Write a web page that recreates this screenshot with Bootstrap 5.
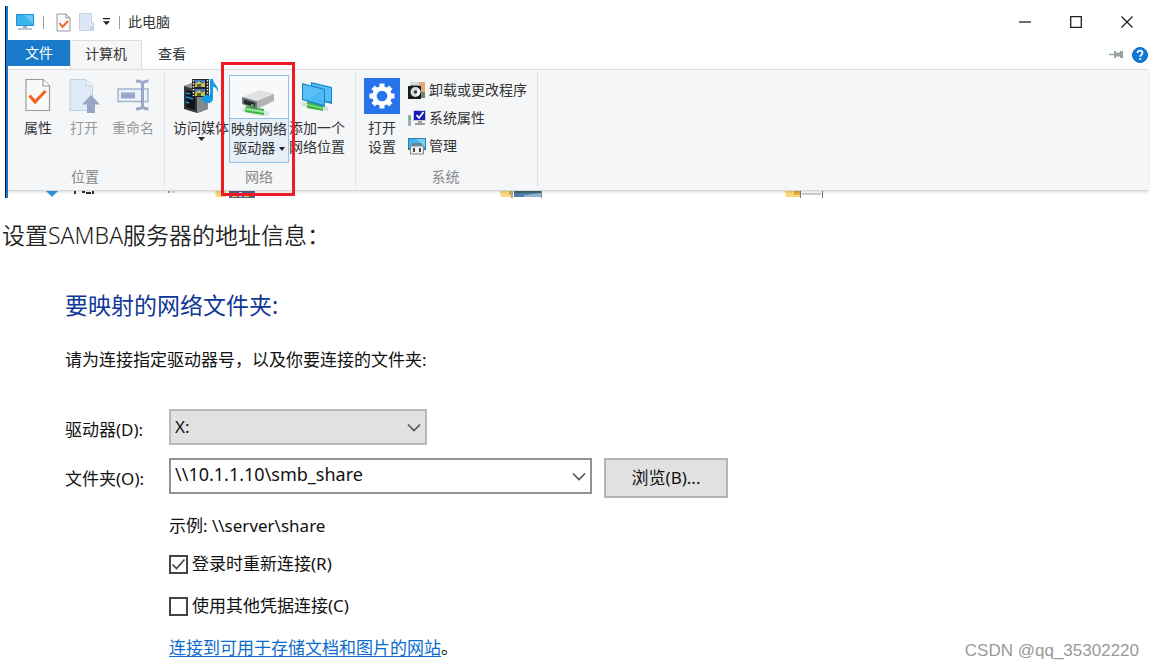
<!DOCTYPE html>
<html lang="zh-CN">
<head>
<meta charset="utf-8">
<meta name="viewport" content="width=device-width, initial-scale=1">
<title>映射网络驱动器</title>
<link href="https://cdn.jsdelivr.net/npm/bootstrap@5.3.0/dist/css/bootstrap.min.css" rel="stylesheet">
<style>
  body { font-family: "Noto Sans", "Noto Sans CJK SC", sans-serif; font-size: 17px; line-height: 24px; color: #111; background: #fff; overflow-x: hidden; }
  svg { display: block; flex: none; }
  button { color: inherit; }

  /* explorer window */
  .explorer { margin: 6px 5px 0; border-left: 1px solid #0a1c30; font-size: 14px; line-height: 18px; color: #333; }
  .explorer-inner { border-left: 2px solid #1979ca; }
  .titlebar { height: 34px; padding: 0 0 2px 7px; }
  .plain-btn { border: 0; background: none; padding: 0; }
  .win-btn { width: 43px; height: 30px; display: flex; align-items: center; justify-content: center; }
  .v-sep { width: 1px; height: 13px; background: #999; }
  .ribbon-tabs { height: 29px; }
  .ribbon-tabs .nav-link { padding: 4px 15px; border: 1px solid transparent; border-bottom: 0; border-radius: 0; color: #333; height: 29px; line-height: 18px; }
  .ribbon-tabs .tab-file { background: #1979ca; color: #fff; height: 26px; padding: 3px 16px; }
  .ribbon-tabs .tab-current { background: #f5f6f8; border-color: #dcdee0; padding: 4px 14px; }
  .ribbon { background: #f5f6f8; border-top: 1px solid #dcdee0; border-bottom: 1px solid #d5d7d9; height: 122px; box-shadow: 0 1px 3px rgba(0,0,0,.16); position: relative; z-index: 1; }
  .ribbon-group { margin: 2px 0 4px; padding: 0 10px 0 8px; border-right: 1px solid #e0e2e4; display: flex; flex-direction: column; justify-content: space-between; }
  .group-name { color: #888; text-align: center; line-height: 18px; }
  .tool { border: 0; background: none; padding: 6px 0 0; display: flex; flex-direction: column; align-items: center; white-space: nowrap; line-height: 19px; }
  .tool .pic { height: 40px; }
  .tool:disabled { color: #999; }
  .tool-map { position: relative; width: 60px; height: 88px; margin-top: 3px; padding: 0; border: 1px solid #92c0e8; }
  .tool-map .pic { height: 43px; width: 58px; border-bottom: 1px solid #92c0e8; background: #f7f9fb; padding: 11px 0 0 9px; }
  .tool-map .cap { background: #e6eef7; width: 58px; flex: 1; }
  .red-mark { position: absolute; inset: -14px -7px -34px -9px; border: 3px solid #ed1c24; pointer-events: none; z-index: 2; }
  .small-tool { display: flex; align-items: center; gap: 3px; height: 28px; }
  .file-strip { height: 7px; overflow: hidden; display: grid; grid-template-columns: 207px 285px 285px 1fr; }

  /* article and dialog */
  .step { margin: 24px 2px 0; font-size: 23px; line-height: 26px; font-weight: 350; font-family: "Noto Sans", "Noto Sans CJK SC", sans-serif; color: #222; }
  .map-dialog { padding: 42px 14px 0 65px; }
  .map-dialog h1 { font-size: 23px; line-height: 30px; font-weight: 400; color: #0f3797; margin: 0 0 28px; }
  .field-row { display: flex; align-items: flex-start; margin-top: 13px; }
  .drive-row { margin-top: 37px; }
  .field-label { width: 104px; flex: none; padding-top: 9px; }
  .drive { width: 258px; height: 36px; padding: 0 4px 1px; font-size: 17px; line-height: 24px; color: #111; border: 2px solid #b9b9b9; border-radius: 0; background: #e1e1e1 url("data:image/svg+xml,%3Csvg xmlns='http://www.w3.org/2000/svg' viewBox='0 0 14 9'%3E%3Cpath d='M1 1.5l6 6 6-6' fill='none' stroke='%23555' stroke-width='1.7'/%3E%3C/svg%3E") no-repeat right 4px center / 14px 9px; }
  .folder { width: 423px; height: 36px; border: 2px solid #929292; padding-right: 4px; }
  .folder input { border: 0; outline: 0; padding: 0 4px 4px; min-width: 0; color: #111; background: none; font-size: 18px; }
  .browse { width: 124px; height: 40px; border: 2px solid #b5b5b5; border-radius: 0; background: #e1e1e1; color: #111; font-size: 17px; padding: 0; margin-left: 12px; }
  .indent { padding-left: 104px; }
  .example { margin: 16px 0 14px; }
  .tick { gap: 4px; margin-bottom: 18px; }
  .tick .form-check-input { width: 19px; height: 19px; margin: 0; border: 2px solid #444; border-radius: 0; background-color: #fff; background-size: 15px 15px; }
  .tick .form-check-input:checked { background-color: #fff; background-image: url("data:image/svg+xml,%3Csvg xmlns='http://www.w3.org/2000/svg' viewBox='0 0 15 15'%3E%3Cpath d='M1.5 7.5l4 4 8-9' fill='none' stroke='%23444' stroke-width='1.7'/%3E%3C/svg%3E"); }
  .site-link { color: #0a6cce; text-underline-offset: 2px; }
  .watermark { font-family: "Liberation Sans", sans-serif; font-size: 17px; line-height: 18px; color: #999; }
</style>
</head>
<body>
<section class="explorer">
 <div class="explorer-inner">
  <header class="titlebar d-flex align-items-center">
    <svg width="20" height="18" viewBox="0 0 20 18"><path d="M1 1h18v12H1z" fill="#1e8fd8"/><path d="M2 2h16v10H2z" fill="#38b3ec"/><path d="M9 2h9v9z" fill="#64c9f5"/><path d="M8 13h4v2H8z" fill="#9eb0bc"/><path d="M3 15h14v2H3z" fill="#b3c7d5"/></svg>
    <span class="v-sep ms-2"></span>
    <button class="plain-btn ms-2 ps-1" aria-label="属性"><svg width="15" height="19" viewBox="0 0 15 19"><path d="M1 1h9l4 4v13H1z" fill="#fafafa" stroke="#999"/><path d="M10 1v4h4" fill="none" stroke="#999"/><path d="M3.5 10l3 4 5.5-6" fill="none" stroke="#ed6a26" stroke-width="2"/></svg></button>
    <button class="plain-btn ms-2" aria-label="新建文件夹"><svg width="15" height="18" viewBox="0 0 15 18"><path d="M.5.5h12v9h2v8H.5z" fill="#dde6f5" stroke="#c6d2e6"/><path d="M11 13h3v4h-3z" fill="#c9d6ea"/></svg></button>
    <button class="plain-btn ms-2" aria-label="自定义快速访问工具栏"><svg width="9" height="8" viewBox="0 0 9 8"><path d="M1 0h7v1.3H1zM1 3.3h7L4.5 7z" fill="#222"/></svg></button>
    <span class="v-sep ms-2"></span>
    <span class="ms-2">此电脑</span>
    <div class="ms-auto d-flex gap-2">
      <button class="plain-btn win-btn" aria-label="最小化"><svg width="12" height="12" viewBox="0 0 12 12"><path d="M0 6h12" stroke="#222" stroke-width="1.3"/></svg></button>
      <button class="plain-btn win-btn" aria-label="最大化"><svg width="12" height="12" viewBox="0 0 12 12"><path d="M.7.7h10.6v10.6H.7z" fill="none" stroke="#222" stroke-width="1.3"/></svg></button>
      <button class="plain-btn win-btn" aria-label="关闭"><svg width="12" height="12" viewBox="0 0 12 12"><path d="M.5.5l11 11M11.500.5l-11 11" stroke="#222" stroke-width="1.3"/></svg></button>
    </div>
  </header>

  <nav class="ribbon-tabs d-flex">
    <a href="#file" class="nav-link tab-file">文件</a>
    <a href="#computer" class="nav-link tab-current">计算机</a>
    <a href="#view" class="nav-link">查看</a>
    <div class="ms-auto d-flex align-items-center gap-2">
      <button class="plain-btn" aria-label="固定功能区"><svg width="15" height="9" viewBox="0 0 15 9"><path d="M0 4.500h6" stroke="#96a0a7" stroke-width="1.4"/><path d="M5 1h2v1.500h4V1h3v7h-3V6.500H7V8H5z" fill="#96a0a7"/></svg></button>
      <button class="plain-btn" aria-label="帮助"><svg width="16" height="16" viewBox="0 0 16 16"><circle cx="8" cy="8" r="7.500" fill="#0c7bd8" stroke="#0868b5"/><path d="M5.500 6C5.500 2.800 10.500 2.900 10.500 6c0 1.800-2.300 1.800-2.300 3.700" fill="none" stroke="#fff" stroke-width="1.700"/><circle cx="8.200" cy="12" r="1.100" fill="#fff"/></svg></button>
    </div>
  </nav>

  <div class="ribbon d-flex">
    <div class="ribbon-group">
      <div class="d-flex">
        <button class="tool ms-1 ps-1">
          <span class="pic"><svg width="26" height="34" viewBox="0 0 26 34"><path d="M1 1.500h17l6.500 6.500v24.500H1z" fill="#f9f9f9" stroke="#999" stroke-width="1.200"/><path d="M18 1.500V8h6.500" fill="#fff" stroke="#999" stroke-width="1.200"/><path d="M4.500 17.500l5.500 6.500L20.500 13" fill="none" stroke="#f2641c" stroke-width="3"/></svg></span>属性</button>
        <button class="tool ms-3" disabled>
          <span class="pic"><svg width="32" height="36" viewBox="0 0 32 36"><path d="M2 1.500h16l6.500 6.500v24.500H2z" fill="#e0e9f7" stroke="#c3cfe2"/><path d="M18 1.500V8h6.500" fill="#edf3fc" stroke="#c3cfe2"/><path d="M23 17l9 9.500h-5V35h-8v-8.500h-5z" fill="#98a6c3"/></svg></span>打开</button>
        <button class="tool ms-2 ps-1" disabled>
          <span class="pic"><svg width="34" height="34" viewBox="0 0 34 34"><path d="M2 11h30v12.500H2z" fill="#edf2fa" stroke="#a3b5d3" stroke-width="1.500"/><path d="M5 14.500h14v6H5z" fill="#99a8c8"/><path d="M20 3c4 0 5.500.5 6.500 2.200C27.500 3.500 29 3 32.500 3M26.500 5v24M20 31c4 0 5.500-.5 6.500-2.200 1 1.700 2.500 2.200 6 2.200" fill="none" stroke="#99a8c5" stroke-width="3"/></svg></span>重命名</button>
      </div>
      <div class="group-name">位置</div>
    </div>

    <div class="ribbon-group">
      <div class="d-flex">
        <button class="tool">
          <span class="pic"><svg width="36" height="36" viewBox="0 0 36 36"><path d="M1 8l14-5 10 4v24l-11 4L1 31z" fill="#343638"/><path d="M14 12l11-5v24l-11 4z" fill="#85888a"/><path d="M1 8l14-5 10 4-11 5z" fill="#9a9c9e"/><path d="M3 12l9 2v18l-9-3z" fill="#121416"/><path d="M3 15l4 1m-4 3l7 2m-7 3l3 1" stroke="#1595eb" stroke-width="1.800"/><path d="M9 1h17v18H9z" fill="#242424"/><path d="M12 2h10v7H12zM12 11h10v7H12z" fill="#417dbe"/><path d="M12 6l4-3 3 3 3-2v5H12zM12 15l4-3 3 3 3-2v5H12z" fill="#d9bd40"/><path d="M14 6h4v3h-4zM14 15h4v3h-4z" fill="#397540"/><path d="M10.500 2v16M24.500 2v16" stroke="#e9e9e9" stroke-width="1.500" stroke-dasharray="1.500 1.500"/><ellipse cx="24.500" cy="21" rx="5.500" ry="4.300" fill="#159ce5"/><path d="M27 1h3c0 5 6 6 5 14-1-5-3-6-5-6v12h-3z" fill="#159ce5"/></svg></span>访问媒体
          <svg width="7" height="5" viewBox="0 0 7 5"><path d="M0 0h7L3.500 4z" fill="#222"/></svg></button>
        <button class="tool tool-map">
          <span class="pic"><svg width="40" height="30" viewBox="0 0 40 30"><path d="M2 22l4-2 22 4 3 2-3 3-5 0-19-4z" fill="#dce4e3"/><path d="M7 19l18 3v6L6 25z" fill="#42b548"/><path d="M7 21l18 3v2L7 23z" fill="#98e999"/><path d="M3 11L24 4l11 3v7l-17 8-15-6z" fill="#b2b2b2"/><path d="M3 10L21 3l14 4-17 7z" fill="#e2e2e2"/><path d="M3 10l15 4.500v8L3 17z" fill="#70757a"/><path d="M5 12.500l11 3.500v4L5 16.500z" fill="#252a2c"/><path d="M12 17l3 1v1.500l-3-1z" fill="#4de250"/></svg></span>
          <span class="cap">映射网络<br>驱动器 <svg class="d-inline-block align-middle" width="6" height="4" viewBox="0 0 6 4"><path d="M0 0h6L3 4z" fill="#222"/></svg></span>
          <span class="red-mark"></span></button>
        <button class="tool">
          <span class="pic"><svg width="32" height="34" viewBox="0 0 32 34"><path d="M10 4l21 5v17l-21-5z" fill="#1587d2"/><path d="M11 5.500l19 4.500v14l-19-4z" fill="#54bdf4"/><path d="M1 24l26 5v4L1 28z" fill="#d5ddda"/><path d="M6 23l16 4v6L6 30z" fill="#40b449"/><path d="M6 26l16 4v1L6 27z" fill="#98ec99"/><path d="M1 5l23 6v18L1 22z" fill="#1584cc"/><path d="M2 6.500L23 12v15L2 21z" fill="#4ab8f2"/><path d="M2 6.500L23 12 7 22l-5-1z" fill="#66c8f8" opacity=".5"/></svg></span>
          <span>添加一个<br>网络位置</span></button>
      </div>
      <div class="group-name">网络</div>
    </div>

    <div class="ribbon-group">
      <div class="d-flex">
        <button class="tool">
          <span class="pic"><svg width="36" height="36" viewBox="0 0 36 36"><path d="M0 0h36v36H0z" fill="#2673ec"/><g fill="none" stroke="#fff"><circle cx="18" cy="18" r="7.600" stroke-width="4.500"/><path d="M18 5.500v4m0 17v4M5.500 18h4m17 0h4M9.200 9.200l2.800 2.800m12 12l2.800 2.800m0-17.600L24 12M12 24l-2.800 2.800" stroke-width="5"/></g></svg></span>
          <span>打开<br>设置</span></button>
        <div class="ms-2 pt-1">
          <button class="plain-btn small-tool"><svg width="18" height="18" viewBox="0 0 18 18"><path d="M2 1h13l2 2v14H4z" fill="#70866e"/><path d="M10 1h7v10h-5z" fill="#e0a875"/><path d="M2 1h9v3H2z" fill="#d6d9da"/><path d="M0 5h13v13H0z" fill="#171b1e"/><circle cx="7.500" cy="11" r="5" fill="#d9dddd"/><path d="M7.500 11l4-3 1 3-3 4z" fill="#fff"/><circle cx="7.500" cy="11" r="1.800" fill="#33383b"/></svg>卸载或更改程序</button>
          <button class="plain-btn small-tool"><svg width="18" height="18" viewBox="0 0 18 18"><path d="M0 6h3v11H0z" fill="#a6abad"/><path d="M1 8h2v3H1z" fill="#4bc552"/><path d="M5 1h13v11H5z" fill="#c8ccda"/><path d="M6 2h11v9H6z" fill="#171bb8"/><path d="M8.500 6l2.500 3 4.500-6" fill="none" stroke="#fff" stroke-width="1.700"/><path d="M10 12h4v2h3v2H7v-2h3z" fill="#9b9fa2"/></svg>系统属性</button>
          <button class="plain-btn small-tool"><svg width="18" height="18" viewBox="0 0 18 18"><path d="M0 1h18v12H0z" fill="#2c7db1"/><path d="M1 2h16v9H1z" fill="#41b3ec"/><path d="M8 2h9v8z" fill="#7bd0f7"/><path d="M5 9V7h8v2" fill="none" stroke="#777" stroke-width="1.500"/><path d="M2.500 9h13v8h-13z" fill="#f1f1f1" stroke="#858585"/><path d="M5 11h2v4H5zM11 11h2v4h-2z" fill="#4b4b4b"/></svg>管理</button>
        </div>
      </div>
      <div class="group-name">系统</div>
    </div>
  </div>

  <!-- top edge of the file list, mostly hidden under the ribbon -->
  <div class="file-strip">
    <svg width="180" height="7" viewBox="0 0 180 7"><path d="M38 0h12l-6 6z" fill="#3399dc"/><path d="M66 0h2v3h-2zM74 0h3v2h-3zM78 1h5v2h-5zM84 0h2v3h-2z" fill="#333"/><path d="M160 0h2v2h-2zM165 0h1v2h-1z" fill="#aaa"/></svg>
    <svg width="46" height="7" viewBox="0 0 46 7"><path d="M0 0h11v6H1z" fill="#fbd978"/><path d="M14 0h26v7H14z" fill="#555f88"/><path d="M17 2h5v4h-5zm12 0h5v4h-5z" fill="#f3c940"/><path d="M24 1h3v5h-3z" fill="#c9d5ef"/></svg>
    <svg width="46" height="7" viewBox="0 0 46 7"><path d="M0 0h11v6H1z" fill="#fbd978"/><path d="M9 0h2v4H9z" fill="#e2b23f"/><path d="M11 0h2v7h-2z" fill="#aaa"/><path d="M14 0h27v6H14z" fill="#4a7fae"/><path d="M14 0h27v2H14z" fill="#42666e"/><path d="M24 4l17-2v4H24z" fill="#91b3cc"/><path d="M41 0h1v7h-1z" fill="#888"/></svg>
    <svg width="46" height="7" viewBox="0 0 46 7"><path d="M0 0h15v6H1z" fill="#fbd978"/><path d="M9 0h6v4H9z" fill="#e2b23f"/><path d="M15 0h1v7h-1zM37 0h1v7h-1z" fill="#777"/><path d="M17 2h19v2H17z" fill="#ccc"/></svg>
  </div>
 </div>
</section>

<p class="step">设置SAMBA服务器的地址信息：</p>

<main class="map-dialog">
  <h1>要映射的网络文件夹:</h1>
  <p class="mb-0">请为连接指定驱动器号，以及你要连接的文件夹:</p>

  <form>
    <div class="field-row drive-row">
      <label class="field-label" for="drive">驱动器(D):</label>
      <select class="form-select drive" id="drive"><option>X:</option></select>
    </div>
    <div class="field-row">
      <label class="field-label" for="folder">文件夹(O):</label>
      <div class="folder d-flex align-items-center">
        <input class="flex-fill" type="text" id="folder" value="\\10.1.1.10\smb_share">
        <button type="button" class="plain-btn" aria-label="展开"><svg width="14" height="9" viewBox="0 0 14 9"><path d="M1 1.500l6 6 6-6" fill="none" stroke="#555" stroke-width="1.700"/></svg></button>
      </div>
      <button type="button" class="btn browse">浏览(B)...</button>
    </div>
    <div class="indent">
      <p class="example">示例: \\server\share</p>
      <div class="tick d-flex align-items-center">
        <input class="form-check-input" type="checkbox" id="again" checked><label for="again">登录时重新连接(R)</label>
      </div>
      <div class="tick d-flex align-items-center">
        <input class="form-check-input" type="checkbox" id="other"><label for="other">使用其他凭据连接(C)</label>
      </div>
    </div>
    <div class="indent d-flex justify-content-between align-items-end">
      <span><a class="site-link" href="#site">连接到可用于存储文档和图片的网站</a>。</span>
      <span class="watermark">CSDN @qq_35302220</span>
    </div>
  </form>
</main>
<script src="https://cdn.jsdelivr.net/npm/bootstrap@5.3.0/dist/js/bootstrap.bundle.min.js"></script>
</body>
</html>
